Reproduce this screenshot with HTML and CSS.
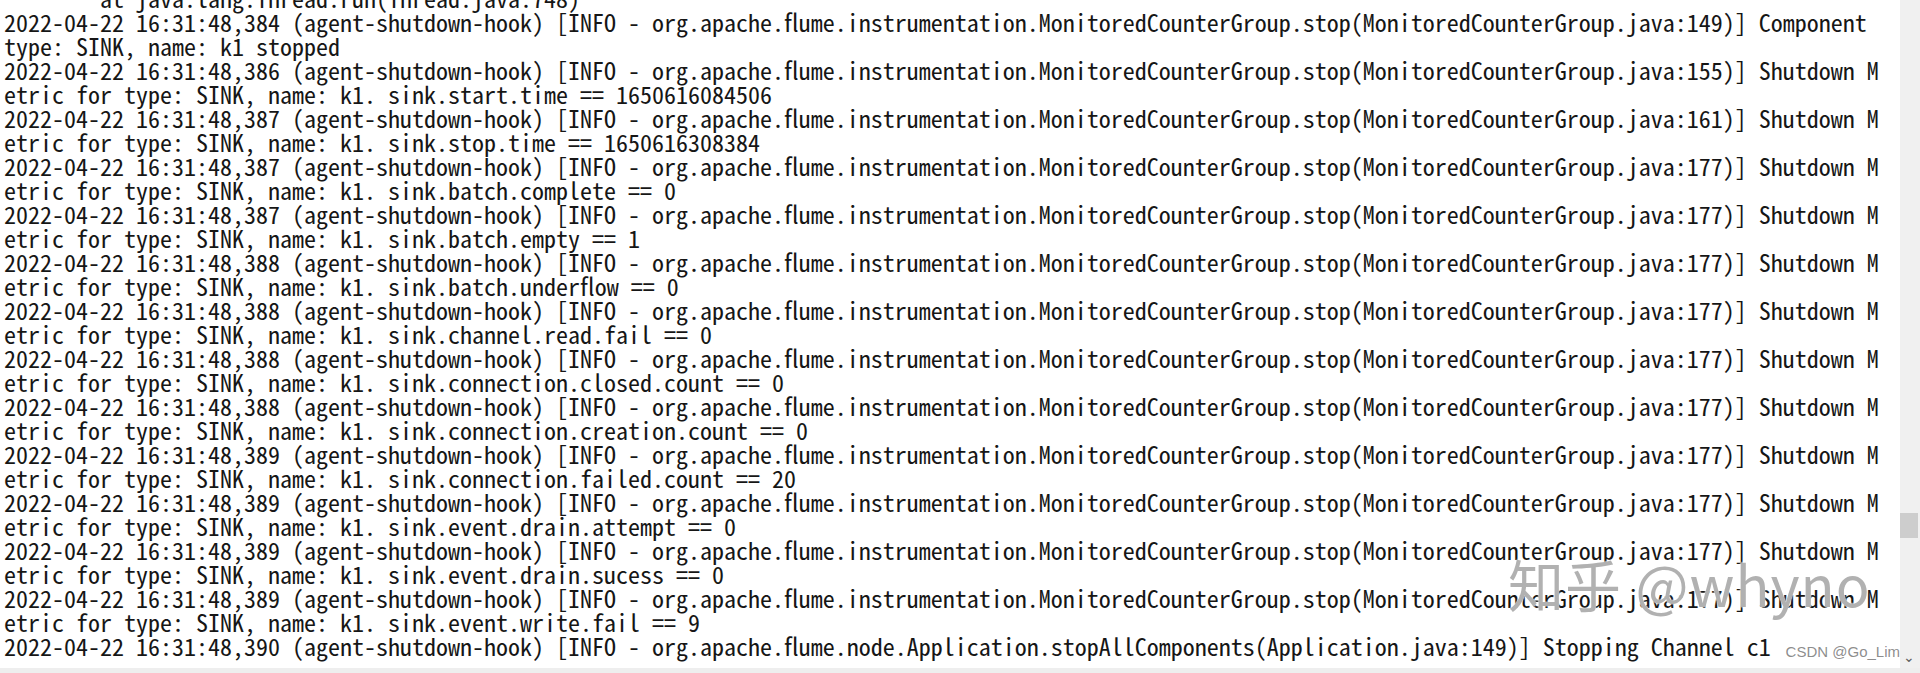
FILE: index.html
```html
<!DOCTYPE html>
<html lang="en">
<head>
    <meta charset="UTF-8">
    <title>flume console</title>
    <link rel="stylesheet" href="styles.css">
</head>
<body>
<div class="window">
    <div class="window__main">
        <div class="console">
<div class="row">        at java.lang.Thread.run(Thread.java:748)</div>
<div class="row">2022-04-22 16:31:48,384 (agent-shutdown-hook) [INFO - org.apache.flume.instrumentation.MonitoredCounterGroup.stop(MonitoredCounterGroup.java:149)] Component</div>
<div class="row">type: SINK, name: k1 stopped</div>
<div class="row">2022-04-22 16:31:48,386 (agent-shutdown-hook) [INFO - org.apache.flume.instrumentation.MonitoredCounterGroup.stop(MonitoredCounterGroup.java:155)] Shutdown M</div>
<div class="row">etric for type: SINK, name: k1. sink.start.time == 1650616084506</div>
<div class="row">2022-04-22 16:31:48,387 (agent-shutdown-hook) [INFO - org.apache.flume.instrumentation.MonitoredCounterGroup.stop(MonitoredCounterGroup.java:161)] Shutdown M</div>
<div class="row">etric for type: SINK, name: k1. sink.stop.time == 1650616308384</div>
<div class="row">2022-04-22 16:31:48,387 (agent-shutdown-hook) [INFO - org.apache.flume.instrumentation.MonitoredCounterGroup.stop(MonitoredCounterGroup.java:177)] Shutdown M</div>
<div class="row">etric for type: SINK, name: k1. sink.batch.complete == 0</div>
<div class="row">2022-04-22 16:31:48,387 (agent-shutdown-hook) [INFO - org.apache.flume.instrumentation.MonitoredCounterGroup.stop(MonitoredCounterGroup.java:177)] Shutdown M</div>
<div class="row">etric for type: SINK, name: k1. sink.batch.empty == 1</div>
<div class="row">2022-04-22 16:31:48,388 (agent-shutdown-hook) [INFO - org.apache.flume.instrumentation.MonitoredCounterGroup.stop(MonitoredCounterGroup.java:177)] Shutdown M</div>
<div class="row">etric for type: SINK, name: k1. sink.batch.underflow == 0</div>
<div class="row">2022-04-22 16:31:48,388 (agent-shutdown-hook) [INFO - org.apache.flume.instrumentation.MonitoredCounterGroup.stop(MonitoredCounterGroup.java:177)] Shutdown M</div>
<div class="row">etric for type: SINK, name: k1. sink.channel.read.fail == 0</div>
<div class="row">2022-04-22 16:31:48,388 (agent-shutdown-hook) [INFO - org.apache.flume.instrumentation.MonitoredCounterGroup.stop(MonitoredCounterGroup.java:177)] Shutdown M</div>
<div class="row">etric for type: SINK, name: k1. sink.connection.closed.count == 0</div>
<div class="row">2022-04-22 16:31:48,388 (agent-shutdown-hook) [INFO - org.apache.flume.instrumentation.MonitoredCounterGroup.stop(MonitoredCounterGroup.java:177)] Shutdown M</div>
<div class="row">etric for type: SINK, name: k1. sink.connection.creation.count == 0</div>
<div class="row">2022-04-22 16:31:48,389 (agent-shutdown-hook) [INFO - org.apache.flume.instrumentation.MonitoredCounterGroup.stop(MonitoredCounterGroup.java:177)] Shutdown M</div>
<div class="row">etric for type: SINK, name: k1. sink.connection.failed.count == 20</div>
<div class="row">2022-04-22 16:31:48,389 (agent-shutdown-hook) [INFO - org.apache.flume.instrumentation.MonitoredCounterGroup.stop(MonitoredCounterGroup.java:177)] Shutdown M</div>
<div class="row">etric for type: SINK, name: k1. sink.event.drain.attempt == 0</div>
<div class="row">2022-04-22 16:31:48,389 (agent-shutdown-hook) [INFO - org.apache.flume.instrumentation.MonitoredCounterGroup.stop(MonitoredCounterGroup.java:177)] Shutdown M</div>
<div class="row">etric for type: SINK, name: k1. sink.event.drain.sucess == 0</div>
<div class="row">2022-04-22 16:31:48,389 (agent-shutdown-hook) [INFO - org.apache.flume.instrumentation.MonitoredCounterGroup.stop(MonitoredCounterGroup.java:177)] Shutdown M</div>
<div class="row">etric for type: SINK, name: k1. sink.event.write.fail == 9</div>
<div class="row">2022-04-22 16:31:48,390 (agent-shutdown-hook) [INFO - org.apache.flume.node.Application.stopAllComponents(Application.java:149)] Stopping Channel c1</div>
        </div>
        <div class="watermark">知乎 @whyno</div>
        <div class="credit">CSDN @Go_Lim</div>
    </div>
    <div class="scrollbar">
        <div class="scrollbar__thumb"></div>
        <div class="scrollbar__arrow">&#x2304;</div>
    </div>
</div>
<div class="hbar"></div>
</body>
</html>
```

FILE: styles.css
```css
html, body {
    margin: 0;
    padding: 0;
    background-color: white;
    overflow: hidden;
}

.window {
    display: flex;
    height: 668px;
}

.window__main {
    position: relative;
    flex: 1;
    overflow: hidden;
    background-color: white;
}

.console {
    margin-top: -14px;
    padding-left: 4px;
    font-family: "Noto Sans CJK JP", "DejaVu Sans Mono", monospace;
    font-feature-settings: "hwid" 1;
    font-size: 24px;
    line-height: 24px;
    color: #161616;
}

.row {
    white-space: pre;
    height: 24px;
}

.watermark {
    position: absolute;
    left: 1508px;
    top: 548px;
    font-family: "Noto Sans CJK SC", "Liberation Sans", sans-serif;
    font-size: 56px;
    line-height: 70px;
    color: rgba(125, 125, 125, 0.6);
    text-shadow: 0 0 1px #fff, 0 0 2px #fff;
    letter-spacing: 1px;
    white-space: nowrap;
}

.credit {
    position: absolute;
    right: 0;
    top: 642px;
    font-family: "Liberation Sans", Arial, sans-serif;
    font-size: 15px;
    line-height: 20px;
    color: rgba(120, 120, 120, 0.85);
    white-space: nowrap;
}

.scrollbar {
    position: relative;
    width: 20px;
    background-color: #f0f0f0;
}

.scrollbar__thumb {
    position: absolute;
    left: 0;
    right: 2px;
    top: 513px;
    height: 25px;
    background-color: #cdcdcd;
}

.scrollbar__arrow {
    position: absolute;
    left: 3px;
    bottom: 4px;
    font-family: "DejaVu Sans", sans-serif;
    font-size: 14px;
    line-height: 14px;
    color: #606060;
}

.hbar {
    height: 5px;
    background-color: #eeeeee;
}
```
